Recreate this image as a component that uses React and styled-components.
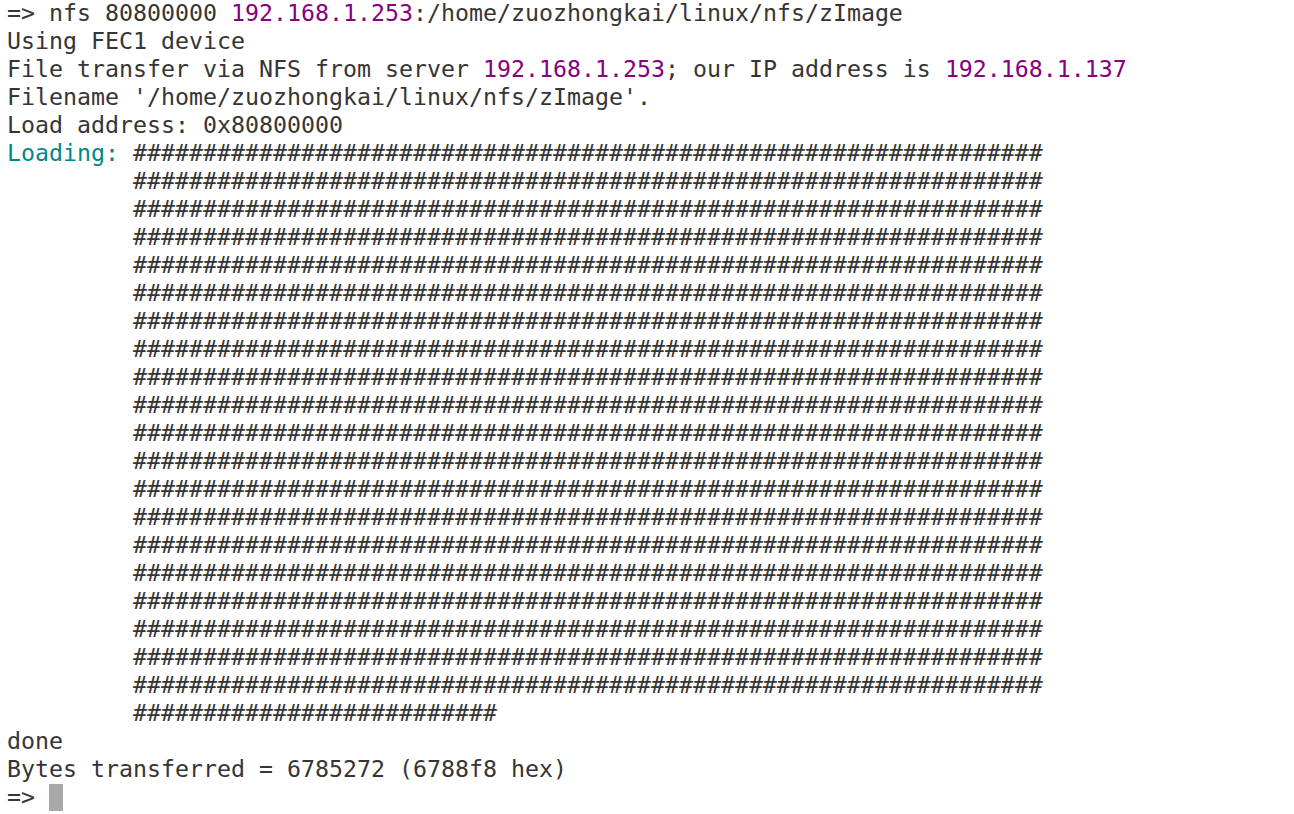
import React from "react";
import styled, { createGlobalStyle } from "styled-components";

const Global = createGlobalStyle`
  html, body {
    margin: 0;
    padding: 0;
    background: #ffffff;
  }
`;

const Terminal = styled.div`
  width: 1294px;
  height: 815px;
  margin-top: -1px;
  overflow: hidden;
  box-sizing: border-box;
  padding: 0 0 0 7px;
  background: #ffffff;
  color: #353535;
  font-family: "DejaVu Sans Mono", "Liberation Mono", monospace;
  font-size: 23.25px;
  line-height: 28px;
`;

const Line = styled.div`
  white-space: pre;
  height: 28px;
`;

const Hl = styled.span`
  color: ${(p) => (p.$tone === "teal" ? "#00878a" : "#87007f")};
`;

const Cursor = styled.span`
  display: inline-block;
  width: 14px;
  height: 27px;
  vertical-align: top;
  margin-top: 1px;
  background: #a9a9a9;
`;

const HASHES = "#".repeat(65);
const INDENT = "         ";

const App = () => {
  const fullRows = Array.from({ length: 19 });

  return (
    <>
      <Global />
      <Terminal>
        <Line>
          {"=> nfs 80800000 "}
          <Hl>192.168.1.253</Hl>
          {":/home/zuozhongkai/linux/nfs/zImage"}
        </Line>
        <Line>Using FEC1 device</Line>
        <Line>
          {"File transfer via NFS from server "}
          <Hl>192.168.1.253</Hl>
          {"; our IP address is "}
          <Hl>192.168.1.137</Hl>
        </Line>
        <Line>Filename '/home/zuozhongkai/linux/nfs/zImage'.</Line>
        <Line>Load address: 0x80800000</Line>
        <Line>
          <Hl $tone="teal">Loading:</Hl>
          {" " + HASHES}
        </Line>
        {fullRows.map((_, i) => (
          <Line key={i}>{INDENT + HASHES}</Line>
        ))}
        <Line>{INDENT + "#".repeat(26)}</Line>
        <Line>done</Line>
        <Line>Bytes transferred = 6785272 (6788f8 hex)</Line>
        <Line>
          {"=> "}
          <Cursor />
        </Line>
      </Terminal>
    </>
  );
};

export default App;
